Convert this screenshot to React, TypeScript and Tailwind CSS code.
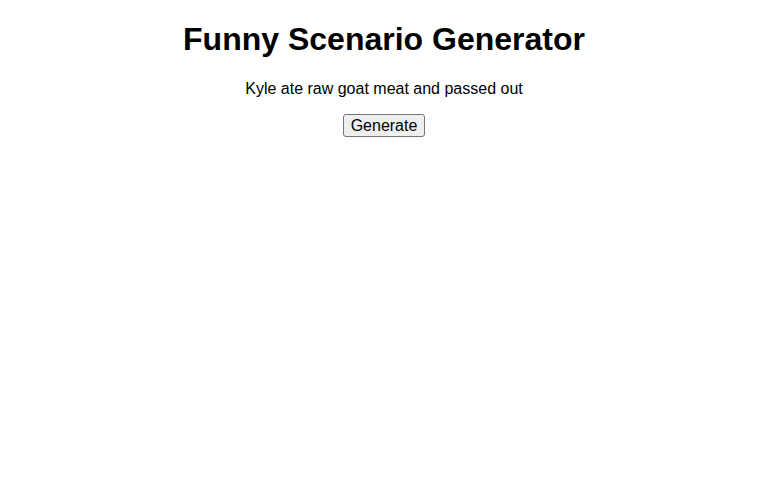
import { useState } from "react";

const scenarios = [
  "Kyle ate raw goat meat and passed out",
  "Kyle tried to juggle eggs and lost",
  "Kyle fell asleep in the cereal aisle",
];

export default function App() {
  const [scenario, setScenario] = useState(scenarios[0]);

  const generate = () => {
    const next = scenarios[Math.floor(Math.random() * scenarios.length)];
    setScenario(next);
  };

  return (
    <div className="min-h-[480px] bg-white text-center text-black font-['Liberation_Sans',Arial,sans-serif]">
      <h1 className="pt-[21.44px] text-[32px] font-bold leading-[37px]">
        Funny Scenario Generator
      </h1>
      <p className="mt-[21.44px] text-base leading-[18px]">{scenario}</p>
      <button
        onClick={generate}
        className="mt-4 px-[7px] pt-[2px] pb-px text-base leading-[18px] bg-[#efefef] border border-[#767676] rounded-[3px] hover:bg-[#e5e5e5]"
      >
        Generate
      </button>
    </div>
  );
}
